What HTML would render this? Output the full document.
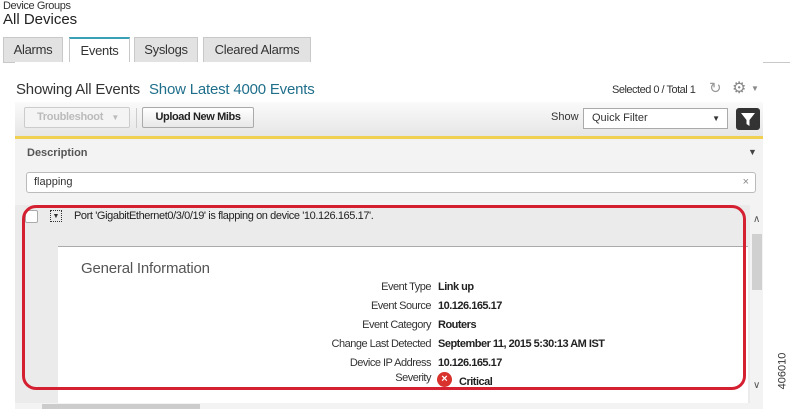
<!DOCTYPE html>
<html><head><style>
*{margin:0;padding:0;box-sizing:border-box}
body{width:790px;height:409px;overflow:hidden;background:#fff;font-family:"Liberation Sans",sans-serif;position:relative;color:#333}
.a{position:absolute}
.tab{position:absolute;top:37px;height:25px;background:#e2e2e2;border:1px solid #c8c8c8;border-bottom:none;font-size:13px;color:#333;text-align:center;line-height:23px;letter-spacing:-0.3px}
.lbl{position:absolute;font-size:11px;color:#333;text-align:right;width:200px;left:231px;letter-spacing:-0.5px}
.val{position:absolute;font-size:11px;font-weight:bold;color:#222;left:438px;letter-spacing:-0.5px}
</style></head><body>
<div class="a" style="left:3px;top:0;font-size:11px;color:#333;letter-spacing:-0.4px">Device Groups</div>
<div class="a" style="left:3px;top:11px;font-size:15px;color:#222">All Devices</div>
<div class="tab" style="left:3px;width:60px">Alarms</div>
<div class="tab" style="left:69px;width:61px;background:#fff;border-top:2px solid #3aa0b5;height:26px">Events</div>
<div class="tab" style="left:134px;width:64px">Syslogs</div>
<div class="tab" style="left:203px;width:108px">Cleared Alarms</div>
<div class="a" style="left:3px;top:62px;width:787px;height:1px;background:#c8c8c8"></div>
<div class="a" style="left:15px;top:62px;width:748px;height:347px;background:#fff"></div>
<div class="a" style="left:16px;top:81px;font-size:15px;color:#333;letter-spacing:-0.2px">Showing All Events</div>
<div class="a" style="left:149px;top:81px;font-size:15px;color:#1f6f8b;letter-spacing:-0.2px">Show Latest 4000 Events</div>
<div class="a" style="left:612px;top:84px;font-size:11px;color:#333;letter-spacing:-0.5px">Selected 0 / Total 1</div>
<div class="a" style="left:709px;top:79px;font-size:15px;color:#999">&#x21bb;</div>
<div class="a" style="left:732px;top:78px;font-size:16px;color:#888">&#x2699;</div>
<div class="a" style="left:751px;top:84px;font-size:8px;color:#888">&#9660;</div>
<div class="a" style="left:15px;top:102px;width:748px;height:34px;background:linear-gradient(#fafafa,#e6e6e6)"></div>
<div class="a" style="left:24px;top:107px;width:106px;height:21px;border:1px solid #ccc;border-radius:2px;background:#f4f4f4;font-size:11px;font-weight:bold;color:#bbb;line-height:19px;padding-left:12px;letter-spacing:-0.3px">Troubleshoot &nbsp;&nbsp;<span style="font-size:8px">&#9660;</span></div>
<div class="a" style="left:136px;top:108px;width:1px;height:20px;background:#ccc"></div>
<div class="a" style="left:142px;top:107px;width:112px;height:21px;border:1px solid #aaa;border-radius:2px;background:linear-gradient(#fff,#e8e8e8);font-size:11px;font-weight:bold;color:#222;line-height:19px;text-align:center;letter-spacing:-0.4px">Upload New Mibs</div>
<div class="a" style="left:551px;top:111px;font-size:11px">Show</div>
<div class="a" style="left:583px;top:108px;width:145px;height:21px;border:1px solid #aaa;background:#fff;font-size:11px;line-height:19px;padding-left:8px">Quick Filter<span style="position:absolute;right:7px;font-size:8px">&#9660;</span></div>
<div class="a" style="left:736px;top:108px;width:24px;height:22px;background:#333;border-radius:3px"><svg width="24" height="22"><path d="M5 5 H19 L13.5 12 V18 L10.5 16 V12 Z" fill="#fff"/></svg></div>
<div class="a" style="left:15px;top:136px;width:748px;height:3px;background:#f0d050"></div>
<div class="a" style="left:15px;top:139px;width:748px;height:270px;background:#f3f3f3"></div>
<div class="a" style="left:27px;top:147px;font-size:11px;font-weight:bold;color:#555">Description</div>
<div class="a" style="left:748px;top:147px;font-size:9px;color:#444">&#9660;</div>
<div class="a" style="left:26px;top:172px;width:730px;height:21px;border:1px solid #bbb;border-radius:3px;background:#fff;font-size:11px;line-height:19px;padding-left:7px">flapping<span style="position:absolute;right:6px;color:#888">&#xd7;</span></div>
<div class="a" style="left:15px;top:205px;width:735px;height:198px;background:#ebebeb"></div>
<div class="a" style="left:58px;top:246px;width:690px;height:157px;background:#fff;border-top:1px solid #aaa"></div>
<div class="a" style="left:25px;top:210px;width:13px;height:13px;border:1px solid #aaa;border-radius:2px;background:#fff"></div>
<div class="a" style="left:50px;top:210px;width:12px;height:12px;border:1px dotted #333;font-size:7px;text-align:center;line-height:11px">&#9660;</div>
<div class="a" style="left:74px;top:210px;font-size:11px;color:#222;letter-spacing:-0.4px">Port 'GigabitEthernet0/3/0/19' is flapping on device '10.126.165.17'.</div>
<div class="a" style="left:81px;top:260px;font-size:15px;color:#555;letter-spacing:-0.2px">General Information</div>
<div class="lbl" style="top:281px">Event Type</div><div class="val" style="top:281px">Link up</div>
<div class="lbl" style="top:300px">Event Source</div><div class="val" style="top:300px">10.126.165.17</div>
<div class="lbl" style="top:319px">Event Category</div><div class="val" style="top:319px">Routers</div>
<div class="lbl" style="top:338px">Change Last Detected</div><div class="val" style="top:338px">September 11, 2015 5:30:13 AM IST</div>
<div class="lbl" style="top:357px">Device IP Address</div><div class="val" style="top:357px">10.126.165.17</div>
<div class="lbl" style="top:372px">Severity</div>
<div class="a" style="left:437px;top:372px;width:15px;height:15px;border-radius:50%;background:#d9312b;color:#fff;font-size:11px;font-weight:bold;text-align:center;line-height:15px">&#xd7;</div>
<div class="val" style="top:376px;left:459px">Critical</div>
<div class="a" style="left:751px;top:205px;width:12px;height:198px;background:#f3f3f3"></div>
<div class="a" style="left:753px;top:214px;font-size:10px;color:#555">&#x2227;</div>
<div class="a" style="left:752px;top:234px;width:10px;height:56px;background:#d0d0d0"></div>
<div class="a" style="left:753px;top:380px;font-size:10px;color:#555">&#x2228;</div>
<div class="a" style="left:42px;top:404px;width:158px;height:5px;background:#ccc"></div>
<div class="a" style="left:22px;top:205px;width:724px;height:185px;border:3px solid #d42030;border-radius:14px"></div>
<div class="a" style="left:764px;top:365px;font-size:11px;color:#333;transform:rotate(-90deg);transform-origin:center">406010</div>
</body></html>
